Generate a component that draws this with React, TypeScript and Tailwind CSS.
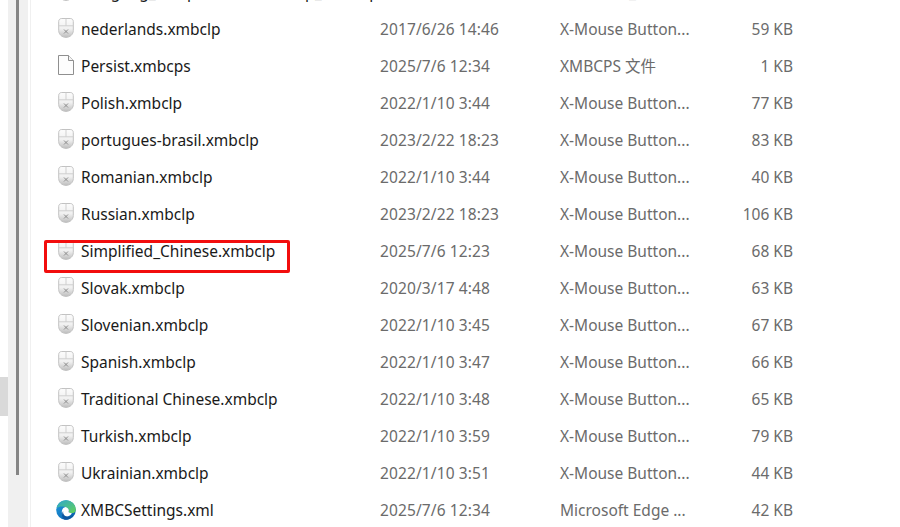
import React from "react";

function MouseIcon() {
  return (
    <svg width="16" height="20" viewBox="0 0 16 20" className="block">
      <defs>
        <linearGradient id="mb" x1="0" y1="0" x2="0" y2="1">
          <stop offset="0" stopColor="#fcfcfc" />
          <stop offset="0.55" stopColor="#f0f0f0" />
          <stop offset="1" stopColor="#bdbdbd" />
        </linearGradient>
      </defs>
      <path d="M.7 3.500C.7 1.600 2 .5 3.700.5h8.600c1.700 0 3 1.100 3 3v9c0 3.800-3.200 6.900-7.300 6.900S.7 16.300.7 12.500z" fill="url(#mb)" stroke="#c2c2c2" strokeWidth="1" />
      <path d="M8 .8v7M1 7.800h14" stroke="#cfcfcf" strokeWidth="1" fill="none" />
      <path d="M6 11.500l4 4M10 11.500l-4 4" stroke="#8c8c8c" strokeWidth="1" fill="none" />
    </svg>
  );
}

function PageIcon() {
  return (
    <svg width="16" height="20" viewBox="0 0 16 20" className="block">
      <path d="M.5.500h10l5 5v14H.5z" fill="#fdfdfd" stroke="#8f8f8f" strokeWidth="1" />
      <path d="M10.500.500v5h5" fill="#f4f4f4" stroke="#8f8f8f" strokeWidth="1" />
    </svg>
  );
}

function EdgeIcon() {
  return (
    <svg width="20" height="20" viewBox="0 0 20 20" className="block">
      <defs>
        <linearGradient id="e1" x1="0" y1="0" x2="1" y2="1">
          <stop offset="0" stopColor="#2ea6cf" />
          <stop offset="1" stopColor="#63d257" />
        </linearGradient>
        <linearGradient id="e2" x1="0" y1="0" x2="1" y2="1">
          <stop offset="0" stopColor="#1f9be0" />
          <stop offset="1" stopColor="#0a5aa5" />
        </linearGradient>
      </defs>
      <circle cx="10" cy="10" r="9.800" fill="url(#e2)" />
      <path d="M.6 8C1.800 3.200 5.500.2 10 .2c5.500 0 9.800 4.300 9.800 9.500 0 2.300-1.800 3.400-4 3.400-1.500 0-2.800-.3-3.300-1 .8-2-.5-4.500-3.300-5.200C6 6 2.500 6.500.6 8z" fill="url(#e1)" />
      <path d="M9.500 6.900c2.800.5 4 3.200 3 5.200.5.700 2 1 3.300 1-.7 2.500-3.700 4-6.300 3.400-3-.7-4.200-3.500-3.500-6 .3-1.700 1.500-3.300 3.500-3.600z" fill="#ffffff" />
      <path d="M7.200 11c-.6 3 1.500 5.700 4.800 5.700 2 0 3.800-.8 5.500-2.500-1.500 3.300-4.500 5.600-7.500 5.600-.8 0-1.500-.1-2-.3C5.500 17 5.800 13 7.200 11z" fill="#0c57a0" />
    </svg>
  );
}

type Row = { n: string; d: string; t: string; s: string; i?: "m" | "p" | "e" };

const rows: Row[] = [
  { n: "Hangong_Scrope Mandarin Nop_.xmbclp", d: "", t: "XMBCLPS_", s: "" },
  { n: "nederlands.xmbclp", d: "2017/6/26 14:46", t: "X-Mouse Button...", s: "59 KB" },
  { n: "Persist.xmbcps", d: "2025/7/6 12:34", t: "XMBCPS 文件", s: "1 KB", i: "p" },
  { n: "Polish.xmbclp", d: "2022/1/10 3:44", t: "X-Mouse Button...", s: "77 KB" },
  { n: "portugues-brasil.xmbclp", d: "2023/2/22 18:23", t: "X-Mouse Button...", s: "83 KB" },
  { n: "Romanian.xmbclp", d: "2022/1/10 3:44", t: "X-Mouse Button...", s: "40 KB" },
  { n: "Russian.xmbclp", d: "2023/2/22 18:23", t: "X-Mouse Button...", s: "106 KB" },
  { n: "Simplified_Chinese.xmbclp", d: "2025/7/6 12:23", t: "X-Mouse Button...", s: "68 KB" },
  { n: "Slovak.xmbclp", d: "2020/3/17 4:48", t: "X-Mouse Button...", s: "63 KB" },
  { n: "Slovenian.xmbclp", d: "2022/1/10 3:45", t: "X-Mouse Button...", s: "67 KB" },
  { n: "Spanish.xmbclp", d: "2022/1/10 3:47", t: "X-Mouse Button...", s: "66 KB" },
  { n: "Traditional Chinese.xmbclp", d: "2022/1/10 3:48", t: "X-Mouse Button...", s: "65 KB" },
  { n: "Turkish.xmbclp", d: "2022/1/10 3:59", t: "X-Mouse Button...", s: "79 KB" },
  { n: "Ukrainian.xmbclp", d: "2022/1/10 3:51", t: "X-Mouse Button...", s: "44 KB" },
  { n: "XMBCSettings.xml", d: "2025/7/6 12:34", t: "Microsoft Edge ...", s: "42 KB", i: "e" },
];

export default function App() {
  return (
    <div className="relative flex h-[527px] w-[900px] overflow-hidden bg-white font-['Noto_Sans','Noto_Sans_CJK_SC',sans-serif] text-[15.5px]">
      <div className="w-2 shrink-0">
        <div className="mt-[377px] h-[39px] bg-[#d9d9d9]" />
      </div>
      <div className="w-5 shrink-0 bg-[#f0f0f0] pl-2">
        <div className="h-[475px] w-[3px] bg-[#858585]" />
      </div>
      <div className="ml-[2px] w-px shrink-0 bg-[#f0f0f0]" />
      <div className="-mt-[26px] flex-1 pl-[26px]">
        {rows.map((r) => (
          <div key={r.n} className="flex h-[37px] items-center">
            <div className="w-6 shrink-0">
              {r.i === "p" ? (
                <div className="-mt-[3px] ml-px"><PageIcon /></div>
              ) : r.i === "e" ? (
                <div className="-ml-px -mt-[2px]"><EdgeIcon /></div>
              ) : (
                <div className="-mt-[3px] ml-px"><MouseIcon /></div>
              )}
            </div>
            <div className="w-[299px] shrink-0 whitespace-nowrap text-[#1a1a1a]">{r.n}</div>
            <div className="w-[180px] shrink-0 whitespace-nowrap tracking-[0.12px] text-[#6b6b6b]">{r.d}</div>
            <div className="w-[150px] shrink-0 whitespace-nowrap text-[#6b6b6b]">{r.t}</div>
            <div className="w-[83px] shrink-0 whitespace-nowrap text-right text-[#6b6b6b]">{r.s}</div>
          </div>
        ))}
      </div>
      <div className="absolute left-[44px] top-[240px] h-[33px] w-[246px] rounded-[2px] border-[3px] border-[#f20d0d]" />
    </div>
  );
}
